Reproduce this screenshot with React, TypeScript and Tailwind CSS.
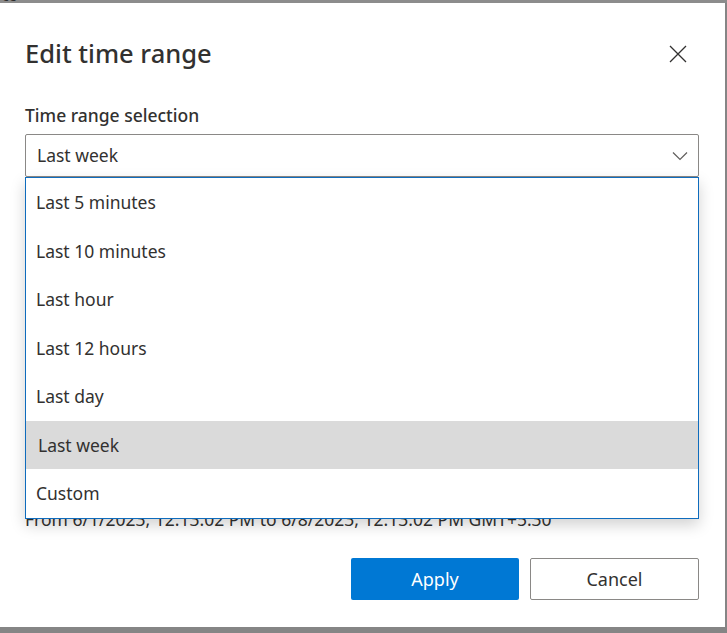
import React from 'react';

const options = ['Last 5 minutes', 'Last 10 minutes', 'Last hour', 'Last 12 hours', 'Last day', 'Last week', 'Custom'];

const App: React.FC = () => {
  const selected = 'Last week';

  return (
    <div className="w-[727px] h-[633px] bg-[#858585] overflow-hidden flex flex-col" style={{ fontFamily: '"Noto Sans", "Open Sans", sans-serif' }}>
      {/* strip of the page behind the dialog */}
      <div className="h-[3px] overflow-hidden bg-[#8c8c8c] shrink-0">
        <div className="-mt-[12px] pl-[2px] text-[14px] text-[#2b2b2b] leading-[16px]">ce &nbsp;✕</div>
      </div>

      <div className="relative w-[725px] h-[624px] bg-white text-[#323130]">
        {/* Header */}
        <div className="flex items-start justify-between pl-[25px] pr-[38px] pt-[32px]">
          <h1 className="text-[25.5px] leading-[36px] font-medium">Edit time range</h1>
          <button className="mt-[10px] w-[18px] h-[18px] flex items-center justify-center">
            <svg width="18" height="18" viewBox="0 0 18 18" fill="none" stroke="#323130" strokeWidth="1.3">
              <path d="M1 1L17 17M17 1L1 17" />
            </svg>
          </button>
        </div>

        {/* Body */}
        <div className="px-[25px] pt-[32px]">
          <label className="block text-[17.5px] leading-[24px] font-medium">Time range selection</label>
          <div className="mt-[7px] w-[674px] h-[43px] border border-[#8a8886] rounded-[2px] flex items-center justify-between pl-[11px] pr-[10px]">
            <span className="text-[17.5px]">{selected}</span>
            <svg width="16" height="10" viewBox="0 0 16 10" fill="none" stroke="#605e5c" strokeWidth="1.2">
              <path d="M1 1.5L8 8.5L15 1.5" />
            </svg>
          </div>

          {/* covered content */}
          <div className="mt-[330px] text-[17.5px] leading-[24px] text-[#323130] whitespace-nowrap">
            From 6/1/2023, 12:13:02 PM to 6/8/2023, 12:13:02 PM GMT+5:30
          </div>

          {/* Footer */}
          <div className="mt-[27px] flex justify-end gap-[11px] pr-[1px]">
            <button className="w-[168px] h-[42px] rounded-[2px] bg-[#0078d4] text-white text-[18px]">Apply</button>
            <button className="w-[169px] h-[42px] rounded-[2px] border border-[#8a8886] bg-white text-[#323130] text-[18px]">Cancel</button>
          </div>
        </div>

        {/* Dropdown menu */}
        <div className="absolute left-[25px] top-[174px] w-[674px] border border-[#0f6cbd] bg-white shadow-[0_6px_14px_rgba(0,0,0,0.18)]">
          {options.map((o) => (
            <div
              key={o}
              className={
                o === selected
                  ? 'h-[48.5px] flex items-center pl-[12px] bg-[#dadada] text-[17.5px] text-[#323130]'
                  : 'h-[48.5px] flex items-center pl-[10px] text-[17.5px] text-[#323130]'
              }
            >
              {o}
            </div>
          ))}
        </div>
      </div>
    </div>
  );
};

export default App;
